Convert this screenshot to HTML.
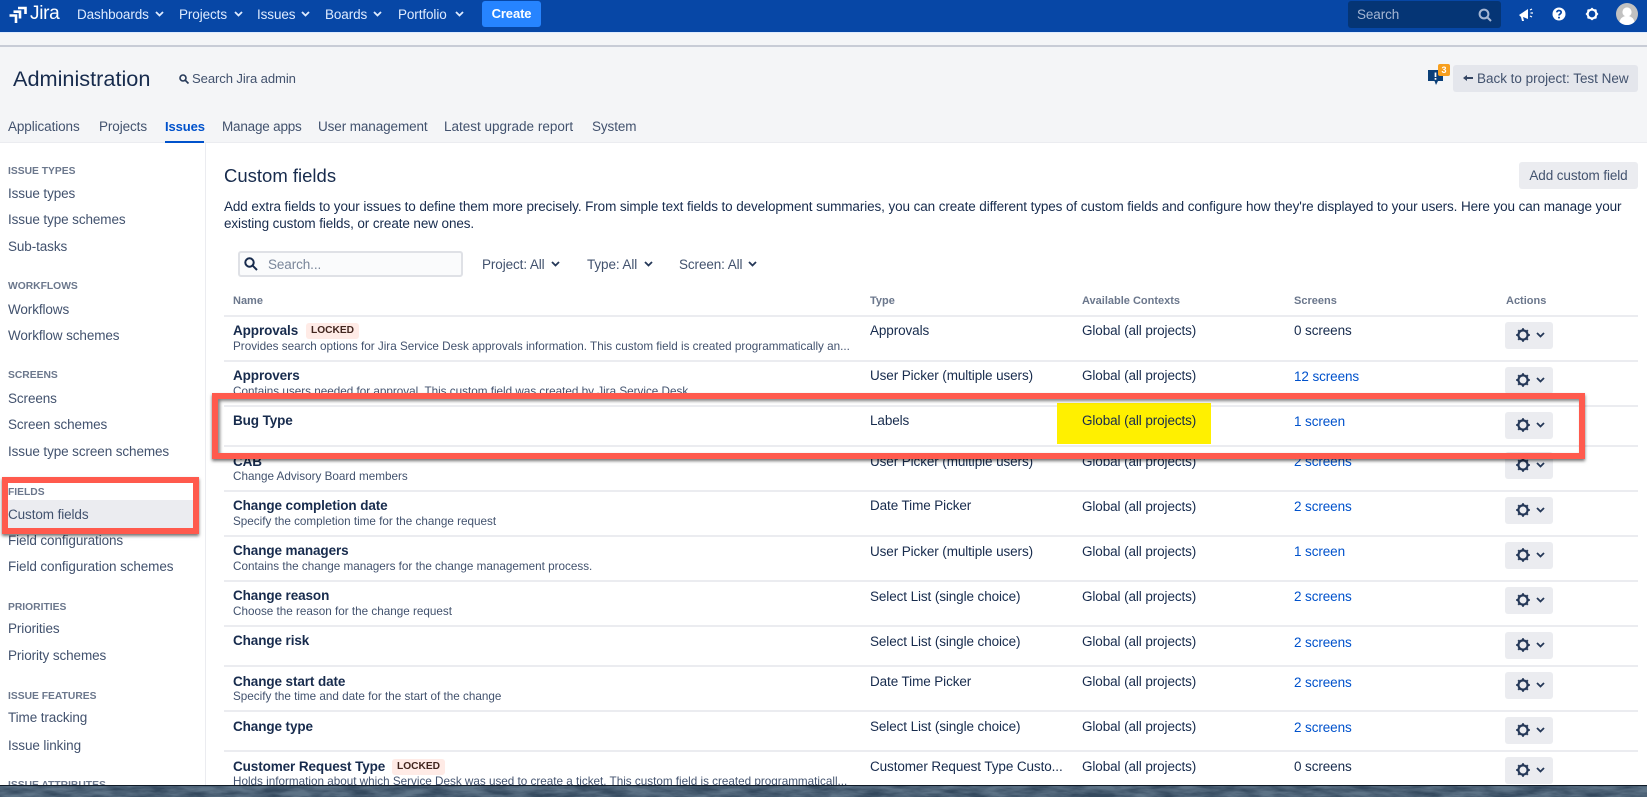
<!DOCTYPE html>
<html><head><meta charset="utf-8"><style>
*{box-sizing:border-box}
html,body{margin:0;padding:0;width:1647px;height:797px;overflow:hidden;background:#fff;font-family:"Liberation Sans",sans-serif;font-size:13.5px;letter-spacing:-.1px;color:#172B4D}
.a{position:absolute;white-space:nowrap;line-height:20px}
.n{color:#DEEBFF;top:5px}
.tab{top:117px;color:#42526E}
.h{font-size:10.3px;font-weight:bold;color:#6B778C;left:8px;letter-spacing:0;margin-top:1px}
.s{left:8px;color:#42526E;margin-top:1px}
.th{top:291px;font-size:11px;font-weight:bold;color:#6B778C;letter-spacing:0}
.nm{left:233px;font-weight:bold;color:#172B4D;margin-top:1px}
.ds{left:233px;font-size:11.7px;letter-spacing:0;color:#42526E;margin-top:1px}
.ty{left:870px;margin-top:1px}.gl{left:1082px;margin-top:1px}.sc{left:1294px;color:#0052CC;margin-top:1px}.sz{left:1294px;margin-top:1px}
.ln{position:absolute;left:224px;width:1414px;height:2px;background:#EBECF0}
.btn{position:absolute;left:1505px;width:48px;height:27px;background:#EBECF0;border-radius:3px}
.lk{position:absolute;height:16px;background:#FFEBE6;border-radius:3px;font-size:10.2px;letter-spacing:0;font-weight:bold;color:#42261F;line-height:16px;padding:0 5px}
svg{position:absolute;overflow:visible}
</style></head><body>
<svg width="0" height="0" style="left:0;top:0"><defs>
<g id="gear"><circle cx="8" cy="8" r="4.6" fill="none" stroke="#253858" stroke-width="2.2"/><g stroke="#253858" stroke-width="2"><path d="M8 1.200v2.200M8 12.600v2.200M1.200 8h2.200M12.600 8h2.200M3.200 3.200l1.600 1.600M11.200 11.200l1.600 1.600M12.800 3.200l-1.600 1.600M4.800 11.200l-1.600 1.600"/></g></g>
<path id="chev" d="M0 0l3.500 3.500L7 0" fill="none" stroke-width="1.800"/>
<filter id="rock" x="0" y="0" width="100%" height="100%"><feTurbulence type="fractalNoise" baseFrequency="0.035 0.16" numOctaves="4" seed="7"/><feColorMatrix values="0 0 0 0 .11  0 0 0 0 .17  0 0 0 0 .24  2.2 0 0 0 -.55"/></filter>
</defs></svg>

<!-- nav -->
<div style="position:absolute;left:0;top:0;width:1647px;height:32px;background:#0747A6"></div>
<div style="position:absolute;left:0;top:32px;width:1647px;height:15px;background:#F4F5F7;border-top:1px solid #DEEBFF;border-bottom:2px solid #C8CCD6"></div>
<svg style="left:9px;top:6px" width="18" height="18" viewBox="0 0 18 18" fill="none" stroke="#fff" stroke-width="2.600"><path d="M.5 9.500H7V17"/><path d="M4.500 5.700H11V12.500"/><path d="M9 2H16.500V8"/></svg>
<span class="a" style="left:30px;top:3px;color:#fff;font-size:19px;line-height:22px;letter-spacing:-.3px">Jira</span>
<span class="a n" style="left:77px">Dashboards</span><svg style="left:156px;top:12px" width="8" height="5" stroke="#DEEBFF"><use href="#chev"/></svg>
<span class="a n" style="left:179px">Projects</span><svg style="left:235px;top:12px" width="8" height="5" stroke="#DEEBFF"><use href="#chev"/></svg>
<span class="a n" style="left:257px">Issues</span><svg style="left:302px;top:12px" width="8" height="5" stroke="#DEEBFF"><use href="#chev"/></svg>
<span class="a n" style="left:325px">Boards</span><svg style="left:374px;top:12px" width="8" height="5" stroke="#DEEBFF"><use href="#chev"/></svg>
<span class="a n" style="left:398px">Portfolio</span><svg style="left:456px;top:12px" width="8" height="5" stroke="#DEEBFF"><use href="#chev"/></svg>
<div class="a" style="left:482px;top:1px;width:59px;height:26px;background:#2684FF;border-radius:3px;color:#fff;text-align:center;line-height:26px;font-weight:bold;font-size:13px">Create</div>
<div style="position:absolute;left:1348px;top:1px;width:153px;height:27px;background:#053575;border-radius:3px"></div>
<span class="a" style="left:1357px;top:4px;color:#A5B6D3;margin-top:1px">Search</span>
<svg style="left:1478px;top:8px" width="14" height="14" viewBox="0 0 14 14" fill="none" stroke="#A5B6D3" stroke-width="2"><circle cx="6" cy="6" r="4.4"/><path d="M9.500 9.500L13 13"/></svg>
<svg style="left:1519px;top:7px" width="16" height="15" viewBox="0 0 16 15"><path d="M0 8l9-6v10L4 10l1 4H3L2 10z" fill="#fff"/><path d="M11 3l2-1M11.500 6H14M11 9l2 1" stroke="#fff" stroke-width="1.200"/></svg>
<svg style="left:1552px;top:7px" width="14" height="14" viewBox="0 0 14 14"><circle cx="7" cy="7" r="6.500" fill="#fff"/><path d="M4.800 5.300C5 2.900 9.200 3 9.200 5.300c0 1.600-2.200 1.600-2.200 3.200" fill="none" stroke="#0747A6" stroke-width="1.700"/><circle cx="7" cy="10.600" r="1" fill="#0747A6"/></svg>
<svg style="left:1585px;top:7px" width="14" height="14" viewBox="0 0 16 16" fill="none"><circle cx="8" cy="8" r="5" stroke="#fff" stroke-width="2.400"/><path stroke="#fff" stroke-width="2" d="M8 1v2.400M8 12.600V15M1 8h2.400M12.600 8H15M3 3l1.800 1.800M11.200 11.200L13 13M13 3l-1.800 1.800M4.800 11.200L3 13"/></svg>
<svg style="left:1616px;top:3px" width="22" height="22" viewBox="0 0 22 22"><circle cx="11" cy="11" r="11" fill="#C1C1C1"/><circle cx="11" cy="9" r="4.600" fill="#fff"/><path d="M3.500 19c1-4.500 4-6 7.500-6s6.500 1.500 7.500 6a11 11 0 0 1-15 0z" fill="#fff"/></svg>

<!-- header -->
<div style="position:absolute;left:0;top:47px;width:1647px;height:96px;background:#F4F5F7;border-bottom:1px solid #EBECF0"></div>
<span class="a" style="left:13px;top:67px;font-size:21.7px;letter-spacing:0;line-height:24px;color:#172B4D">Administration</span>
<svg style="left:179px;top:74px" width="10" height="10" viewBox="0 0 10 10" fill="none" stroke="#253858" stroke-width="1.600"><circle cx="4" cy="4" r="3"/><path d="M6.500 6.500L9.500 9.500"/></svg>
<span class="a" style="left:192px;top:69px;color:#42526E;font-size:13.1px">Search Jira admin</span>
<svg style="left:1428px;top:70px" width="16" height="16" viewBox="0 0 16 16"><path d="M0 0h15v11H10l-2 4-1.500-4H0z" fill="#0B3F78"/><path d="M7.500 2.500v4.500M7.500 8v1.800" stroke="#fff" stroke-width="1.700"/></svg>
<div class="a" style="left:1438px;top:64px;width:12px;height:12px;background:#F79F1F;border-radius:2px;color:#fff;font-size:9px;letter-spacing:0;line-height:12px;text-align:center;font-weight:bold">3</div>
<div style="position:absolute;left:1453px;top:65px;width:185px;height:27px;background:#E4E6EC;border-radius:3px"></div>
<svg style="left:1463px;top:75px" width="10" height="7" viewBox="0 0 10 7"><path d="M0 3l4-3v2h6v2H4v2z" fill="#344563"/></svg>
<span class="a" style="left:1477px;top:69px;color:#42526E;letter-spacing:-.02px">Back to project: Test New</span>

<span class="a tab" style="left:8px">Applications</span>
<span class="a tab" style="left:99px">Projects</span>
<span class="a tab" style="left:165px;color:#0052CC;font-weight:bold;font-size:13px">Issues</span>
<div style="position:absolute;left:165px;top:141px;width:39px;height:2px;background:#0052CC"></div>
<span class="a tab" style="left:222px;letter-spacing:-.2px">Manage apps</span>
<span class="a tab" style="left:318px">User management</span>
<span class="a tab" style="left:444px;letter-spacing:0">Latest upgrade report</span>
<span class="a tab" style="left:592px">System</span>

<!-- sidebar -->
<div style="position:absolute;left:205px;top:143px;width:1px;height:654px;background:#EBECF0"></div>
<span class="a h" style="top:161px">ISSUE TYPES</span>
<span class="a s" style="top:183px">Issue types</span>
<span class="a s" style="top:209px">Issue type schemes</span>
<span class="a s" style="top:236px">Sub-tasks</span>
<span class="a h" style="top:276px">WORKFLOWS</span>
<span class="a s" style="top:299px">Workflows</span>
<span class="a s" style="top:325px">Workflow schemes</span>
<span class="a h" style="top:365px">SCREENS</span>
<span class="a s" style="top:388px">Screens</span>
<span class="a s" style="top:414px">Screen schemes</span>
<span class="a s" style="top:441px">Issue type screen schemes</span>
<div style="position:absolute;left:8px;top:500px;width:186px;height:29px;background:#EBECF0"></div>
<span class="a h" style="top:482px">FIELDS</span>
<span class="a s" style="top:504px">Custom fields</span>
<span class="a s" style="top:530px">Field configurations</span>
<span class="a s" style="top:556px">Field configuration schemes</span>
<span class="a h" style="top:597px">PRIORITIES</span>
<span class="a s" style="top:618px">Priorities</span>
<span class="a s" style="top:645px">Priority schemes</span>
<span class="a h" style="top:686px">ISSUE FEATURES</span>
<span class="a s" style="top:707px">Time tracking</span>
<span class="a s" style="top:735px">Issue linking</span>
<span class="a h" style="top:775px">ISSUE ATTRIBUTES</span>

<!-- content -->
<span class="a" style="left:224px;top:164px;font-size:18.5px;letter-spacing:0;line-height:24px;color:#172B4D">Custom fields</span>
<div class="a" style="left:1519px;top:162px;width:119px;height:27px;background:#EBECF0;border-radius:3px;color:#42526E;text-align:center;line-height:27px;font-size:13.5px">Add custom field</div>
<span class="a" style="left:224px;top:197px">Add extra fields to your issues to define them more precisely. From simple text fields to development summaries, you can create different types of custom fields and configure how they're displayed to your users. Here you can manage your</span>
<span class="a" style="left:224px;top:214px">existing custom fields, or create new ones.</span>

<div style="position:absolute;left:238px;top:251px;width:225px;height:26px;background:#FAFBFC;border:2px solid #DFE1E6;border-radius:3px"></div>
<svg style="left:244px;top:257px" width="14" height="14" viewBox="0 0 14 14" fill="none" stroke="#172B4D" stroke-width="2"><circle cx="5.500" cy="5.500" r="4.200"/><path d="M8.600 8.600L13 13"/></svg>
<span class="a" style="left:268px;top:255px;color:#7A869A">Search...</span>
<span class="a" style="left:482px;top:255px;color:#42526E">Project: All</span><svg style="left:552px;top:262px" width="8" height="5" stroke="#253858"><use href="#chev"/></svg>
<span class="a" style="left:587px;top:255px;color:#42526E">Type: All</span><svg style="left:645px;top:262px" width="8" height="5" stroke="#253858"><use href="#chev"/></svg>
<span class="a" style="left:679px;top:255px;color:#42526E">Screen: All</span><svg style="left:749px;top:262px" width="8" height="5" stroke="#253858"><use href="#chev"/></svg>

<span class="a th" style="left:233px">Name</span>
<span class="a th" style="left:870px">Type</span>
<span class="a th" style="left:1082px">Available Contexts</span>
<span class="a th" style="left:1294px">Screens</span>
<span class="a th" style="left:1506px">Actions</span>

<div class="ln" style="top:315px"></div><div class="ln" style="top:360px"></div><div class="ln" style="top:405px"></div><div class="ln" style="top:445px"></div><div class="ln" style="top:490px"></div><div class="ln" style="top:535px"></div><div class="ln" style="top:580px"></div><div class="ln" style="top:625px"></div><div class="ln" style="top:665px"></div><div class="ln" style="top:710px"></div><div class="ln" style="top:750px"></div>

<span class="a nm" style="top:320px">Approvals</span><span class="lk" style="left:306px;top:323px">LOCKED</span>
<span class="a ds" style="top:336px">Provides search options for Jira Service Desk approvals information. This custom field is created programmatically an...</span>
<span class="a ty" style="top:320px">Approvals</span><span class="a gl" style="top:320px">Global (all projects)</span><span class="a sz" style="top:320px">0 screens</span>

<span class="a nm" style="top:365px">Approvers</span>
<span class="a ds" style="top:381px">Contains users needed for approval. This custom field was created by Jira Service Desk.</span>
<span class="a ty" style="top:365px">User Picker (multiple users)</span><span class="a gl" style="top:365px">Global (all projects)</span><span class="a sc" style="top:366px">12 screens</span>

<div style="position:absolute;left:1057px;top:403px;width:154px;height:41px;background:#FFF000"></div>
<span class="a nm" style="top:410px">Bug Type</span>
<span class="a ty" style="top:410px">Labels</span><span class="a gl" style="top:410px">Global (all projects)</span><span class="a sc" style="top:411px">1 screen</span>

<span class="a nm" style="top:451px">CAB</span>
<span class="a ds" style="top:466px">Change Advisory Board members</span>
<span class="a ty" style="top:451px">User Picker (multiple users)</span><span class="a gl" style="top:451px">Global (all projects)</span><span class="a sc" style="top:451px">2 screens</span>

<span class="a nm" style="top:495px">Change completion date</span>
<span class="a ds" style="top:511px">Specify the completion time for the change request</span>
<span class="a ty" style="top:495px">Date Time Picker</span><span class="a gl" style="top:496px">Global (all projects)</span><span class="a sc" style="top:496px">2 screens</span>

<span class="a nm" style="top:540px">Change managers</span>
<span class="a ds" style="top:556px">Contains the change managers for the change management process.</span>
<span class="a ty" style="top:541px">User Picker (multiple users)</span><span class="a gl" style="top:541px">Global (all projects)</span><span class="a sc" style="top:541px">1 screen</span>

<span class="a nm" style="top:585px">Change reason</span>
<span class="a ds" style="top:601px">Choose the reason for the change request</span>
<span class="a ty" style="top:586px">Select List (single choice)</span><span class="a gl" style="top:586px">Global (all projects)</span><span class="a sc" style="top:586px">2 screens</span>

<span class="a nm" style="top:630px">Change risk</span>
<span class="a ty" style="top:631px">Select List (single choice)</span><span class="a gl" style="top:631px">Global (all projects)</span><span class="a sc" style="top:632px">2 screens</span>

<span class="a nm" style="top:671px">Change start date</span>
<span class="a ds" style="top:686px">Specify the time and date for the start of the change</span>
<span class="a ty" style="top:671px">Date Time Picker</span><span class="a gl" style="top:671px">Global (all projects)</span><span class="a sc" style="top:672px">2 screens</span>

<span class="a nm" style="top:716px">Change type</span>
<span class="a ty" style="top:716px">Select List (single choice)</span><span class="a gl" style="top:716px">Global (all projects)</span><span class="a sc" style="top:717px">2 screens</span>

<span class="a nm" style="top:756px">Customer Request Type</span><span class="lk" style="left:392px;top:759px">LOCKED</span>
<span class="a ds" style="top:771px">Holds information about which Service Desk was used to create a ticket. This custom field is created programmaticall...</span>
<span class="a ty" style="top:756px">Customer Request Type Custo...</span><span class="a gl" style="top:756px">Global (all projects)</span><span class="a sz" style="top:756px">0 screens</span>

<!-- action buttons -->
<div class="btn" style="top:322px"></div><svg style="left:1515px;top:327px" width="16" height="16"><use href="#gear"/></svg><svg style="left:1537px;top:333px" width="8" height="5" stroke="#253858"><use href="#chev"/></svg>
<div class="btn" style="top:367px"></div><svg style="left:1515px;top:372px" width="16" height="16"><use href="#gear"/></svg><svg style="left:1537px;top:378px" width="8" height="5" stroke="#253858"><use href="#chev"/></svg>
<div class="btn" style="top:412px"></div><svg style="left:1515px;top:417px" width="16" height="16"><use href="#gear"/></svg><svg style="left:1537px;top:423px" width="8" height="5" stroke="#253858"><use href="#chev"/></svg>
<div class="btn" style="top:452px"></div><svg style="left:1515px;top:457px" width="16" height="16"><use href="#gear"/></svg><svg style="left:1537px;top:463px" width="8" height="5" stroke="#253858"><use href="#chev"/></svg>
<div class="btn" style="top:497px"></div><svg style="left:1515px;top:502px" width="16" height="16"><use href="#gear"/></svg><svg style="left:1537px;top:508px" width="8" height="5" stroke="#253858"><use href="#chev"/></svg>
<div class="btn" style="top:542px"></div><svg style="left:1515px;top:547px" width="16" height="16"><use href="#gear"/></svg><svg style="left:1537px;top:553px" width="8" height="5" stroke="#253858"><use href="#chev"/></svg>
<div class="btn" style="top:587px"></div><svg style="left:1515px;top:592px" width="16" height="16"><use href="#gear"/></svg><svg style="left:1537px;top:598px" width="8" height="5" stroke="#253858"><use href="#chev"/></svg>
<div class="btn" style="top:632px"></div><svg style="left:1515px;top:637px" width="16" height="16"><use href="#gear"/></svg><svg style="left:1537px;top:643px" width="8" height="5" stroke="#253858"><use href="#chev"/></svg>
<div class="btn" style="top:672px"></div><svg style="left:1515px;top:677px" width="16" height="16"><use href="#gear"/></svg><svg style="left:1537px;top:683px" width="8" height="5" stroke="#253858"><use href="#chev"/></svg>
<div class="btn" style="top:717px"></div><svg style="left:1515px;top:722px" width="16" height="16"><use href="#gear"/></svg><svg style="left:1537px;top:728px" width="8" height="5" stroke="#253858"><use href="#chev"/></svg>
<div class="btn" style="top:757px"></div><svg style="left:1515px;top:762px" width="16" height="16"><use href="#gear"/></svg><svg style="left:1537px;top:768px" width="8" height="5" stroke="#253858"><use href="#chev"/></svg>

<!-- annotations -->
<div style="position:absolute;left:212px;top:393px;width:1373px;height:66px;border:6px solid #FF5A4D;box-shadow:0 2px 3px rgba(0,0,0,.55),inset 2px 2px 3px rgba(0,0,0,.5)"></div>
<div style="position:absolute;left:2px;top:477px;width:197px;height:57px;border:6px solid #FF5A4D;box-shadow:0 2px 3px rgba(0,0,0,.55)"></div>

<!-- bottom strip -->
<div style="position:absolute;left:0;top:785px;width:1647px;height:12px;background:#1E2F42;overflow:hidden;border-top:1px solid #0F1A26">
<svg width="1647" height="12" style="left:0;top:0"><rect width="1647" height="12" fill="#34495E"/><rect width="1647" height="12" filter="url(#rock)"/></svg>
</div>
</body></html>
